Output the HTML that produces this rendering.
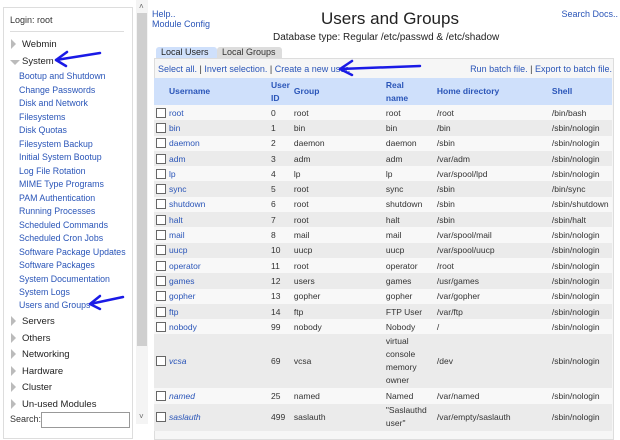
<!DOCTYPE html><html><head><style>
body{margin:0;width:620px;height:424px;overflow:hidden;background:#fff;font-family:"Liberation Sans",sans-serif;font-size:9px;color:#333;position:relative}
a{color:#2a55b8;text-decoration:none}
.side{position:absolute;left:3px;top:7px;width:128px;height:430px;border:1px solid #ddd;background:#fff}
.s{position:absolute;white-space:nowrap}
.cat{left:18px;color:#222;font-size:9.5px}
.tri{position:absolute;left:7px;width:0;height:0;border-top:5px solid transparent;border-bottom:5px solid transparent;border-left:5px solid #bbb}
.lnk{left:15px;color:#2a55b8;font-size:8.8px}
.sb{position:absolute;left:136px;top:0;width:12px;height:424px;background:#f4f4f4}
.thumb{position:absolute;left:137px;top:13px;width:10px;height:333px;background:#cfcfcf}
.main{position:absolute;left:152px;top:0;width:468px}
table{border-collapse:collapse;position:absolute;left:2px;top:78px;width:458px;font-size:8.5px}
td{padding:0 2px;height:15.3px;white-space:nowrap;vertical-align:middle}
tr.g td{background:#ebebeb}
tr.w td{background:#f8f8f8}
th{background:#cfe0fb;color:#2a55b8;font-weight:bold;height:27px;text-align:left;font-size:8.5px;line-height:13px;padding:0 2px}
.cb{display:inline-block;width:8px;height:8px;border:1px solid #666;background:#fff;vertical-align:-2px;margin-right:3px}
</style></head><body>
<div class="side">
<div class="s" style="left:6px;top:7px">Login: root</div>
<div style="position:absolute;left:6px;top:23px;width:114px;border-top:1px solid #ddd"></div>
<div class="tri" style="top:31px"></div><div class="s cat" style="top:31px">Webmin</div>
<div style="position:absolute;left:6px;top:52px;border-left:5px solid transparent;border-right:5px solid transparent;border-top:5px solid #bbb"></div><div class="s cat" style="top:48px">System</div>
<div class="s lnk" style="top:63px">Bootup and Shutdown</div>
<div class="s lnk" style="top:77px">Change Passwords</div>
<div class="s lnk" style="top:90px">Disk and Network</div>
<div class="s lnk" style="top:104px">Filesystems</div>
<div class="s lnk" style="top:117px">Disk Quotas</div>
<div class="s lnk" style="top:131px">Filesystem Backup</div>
<div class="s lnk" style="top:144px">Initial System Bootup</div>
<div class="s lnk" style="top:158px">Log File Rotation</div>
<div class="s lnk" style="top:171px">MIME Type Programs</div>
<div class="s lnk" style="top:185px">PAM Authentication</div>
<div class="s lnk" style="top:198px">Running Processes</div>
<div class="s lnk" style="top:212px">Scheduled Commands</div>
<div class="s lnk" style="top:225px">Scheduled Cron Jobs</div>
<div class="s lnk" style="top:239px">Software Package Updates</div>
<div class="s lnk" style="top:252px">Software Packages</div>
<div class="s lnk" style="top:266px">System Documentation</div>
<div class="s lnk" style="top:279px">System Logs</div>
<div class="s lnk" style="top:292px">Users and Groups</div>
<div class="tri" style="top:308px"></div><div class="s cat" style="top:308px">Servers</div>
<div class="tri" style="top:325px"></div><div class="s cat" style="top:325px">Others</div>
<div class="tri" style="top:341px"></div><div class="s cat" style="top:341px">Networking</div>
<div class="tri" style="top:358px"></div><div class="s cat" style="top:358px">Hardware</div>
<div class="tri" style="top:374px"></div><div class="s cat" style="top:374px">Cluster</div>
<div class="tri" style="top:391px"></div><div class="s cat" style="top:391px">Un-used Modules</div>
<div class="s" style="left:6px;top:406px;color:#333">Search:</div>
<div style="position:absolute;left:37px;top:404px;width:87px;height:14px;border:1px solid #999;background:#fff"></div>
</div>
<div class="sb"></div><div class="thumb"></div>
<div class="s" style="left:139px;top:2px;font-size:8px;color:#666">˄</div>
<div class="s" style="left:139px;top:412px;font-size:8px;color:#666">˅</div>
<div class="main">
<div class="s" style="left:0;top:9px"><a>Help..</a><br><a>Module Config</a></div>
<div class="s" style="left:169px;top:9px;font-size:17px;color:#222">Users and Groups</div>
<div class="s" style="right:2px;top:9px"><a>Search Docs..</a></div>
<div class="s" style="left:121px;top:32px;font-size:10px;color:#222">Database type: Regular /etc/passwd &amp; /etc/shadow</div>
<div class="s" style="left:4px;top:47px;height:11px;width:56px;background:#cfe0fb;border-radius:3px 3px 0 0;color:#222;font-size:9px;padding-left:5px">Local Users</div>
<div class="s" style="left:65px;top:47px;height:11px;width:60px;background:#ddd;border-radius:3px 3px 0 0;color:#333;font-size:9px;padding-left:5px">Local Groups</div>
<div style="position:absolute;left:2px;top:58px;width:458px;height:380px;border:1px solid #ddd;background:#f6f6f6"></div>
<div class="s" style="left:6px;top:64px"><a>Select all.</a> | <a>Invert selection.</a> | <a>Create a new user.</a></div>
<div class="s" style="right:8px;top:64px"><a>Run batch file.</a> | <a>Export to batch file.</a></div>
<table>
<tr><th style="width:98px;padding-left:15px">Username</th><th style="width:18px">User<br>ID</th><th style="width:88px">Group</th><th style="width:47px">Real<br>name</th><th style="width:111px">Home directory</th><th>Shell</th></tr>
<tr class="w"><td><span class="cb"></span><a>root</a></td><td>0</td><td>root</td><td>root</td><td>/root</td><td>/bin/bash</td></tr>
<tr class="g"><td><span class="cb"></span><a>bin</a></td><td>1</td><td>bin</td><td>bin</td><td>/bin</td><td>/sbin/nologin</td></tr>
<tr class="w"><td><span class="cb"></span><a>daemon</a></td><td>2</td><td>daemon</td><td>daemon</td><td>/sbin</td><td>/sbin/nologin</td></tr>
<tr class="g"><td><span class="cb"></span><a>adm</a></td><td>3</td><td>adm</td><td>adm</td><td>/var/adm</td><td>/sbin/nologin</td></tr>
<tr class="w"><td><span class="cb"></span><a>lp</a></td><td>4</td><td>lp</td><td>lp</td><td>/var/spool/lpd</td><td>/sbin/nologin</td></tr>
<tr class="g"><td><span class="cb"></span><a>sync</a></td><td>5</td><td>root</td><td>sync</td><td>/sbin</td><td>/bin/sync</td></tr>
<tr class="w"><td><span class="cb"></span><a>shutdown</a></td><td>6</td><td>root</td><td>shutdown</td><td>/sbin</td><td>/sbin/shutdown</td></tr>
<tr class="g"><td><span class="cb"></span><a>halt</a></td><td>7</td><td>root</td><td>halt</td><td>/sbin</td><td>/sbin/halt</td></tr>
<tr class="w"><td><span class="cb"></span><a>mail</a></td><td>8</td><td>mail</td><td>mail</td><td>/var/spool/mail</td><td>/sbin/nologin</td></tr>
<tr class="g"><td><span class="cb"></span><a>uucp</a></td><td>10</td><td>uucp</td><td>uucp</td><td>/var/spool/uucp</td><td>/sbin/nologin</td></tr>
<tr class="w"><td><span class="cb"></span><a>operator</a></td><td>11</td><td>root</td><td>operator</td><td>/root</td><td>/sbin/nologin</td></tr>
<tr class="g"><td><span class="cb"></span><a>games</a></td><td>12</td><td>users</td><td>games</td><td>/usr/games</td><td>/sbin/nologin</td></tr>
<tr class="w"><td><span class="cb"></span><a>gopher</a></td><td>13</td><td>gopher</td><td>gopher</td><td>/var/gopher</td><td>/sbin/nologin</td></tr>
<tr class="g"><td><span class="cb"></span><a>ftp</a></td><td>14</td><td>ftp</td><td>FTP User</td><td>/var/ftp</td><td>/sbin/nologin</td></tr>
<tr class="w"><td><span class="cb"></span><a>nobody</a></td><td>99</td><td>nobody</td><td>Nobody</td><td>/</td><td>/sbin/nologin</td></tr>
<tr class="g"><td style="height:54px"><span class="cb"></span><a><i>vcsa</i></a></td><td>69</td><td>vcsa</td><td style="line-height:13px">virtual<br>console<br>memory<br>owner</td><td>/dev</td><td>/sbin/nologin</td></tr>
<tr class="w"><td><span class="cb"></span><a><i>named</i></a></td><td>25</td><td>named</td><td>Named</td><td>/var/named</td><td>/sbin/nologin</td></tr>
<tr class="g"><td style="height:27px"><span class="cb"></span><a><i>saslauth</i></a></td><td>499</td><td>saslauth</td><td style="line-height:13px">"Saslauthd<br>user"</td><td>/var/empty/saslauth</td><td>/sbin/nologin</td></tr>
</table>
</div>
<svg style="position:absolute;left:0;top:0" width="620" height="424">
<g stroke="#1a1ae6" stroke-width="2.5" fill="none" stroke-linecap="round">
<path d="M56 60 L100 53 M56 60 L67 52 M56 60 L66 66"/>
<path d="M90 304 L123 297 M90 304 L100 296 M90 304 L100 309"/>
<path d="M340 69 L420 66 M340 69 L352 61 M340 69 L352 75"/>
</g></svg>
</body></html>
